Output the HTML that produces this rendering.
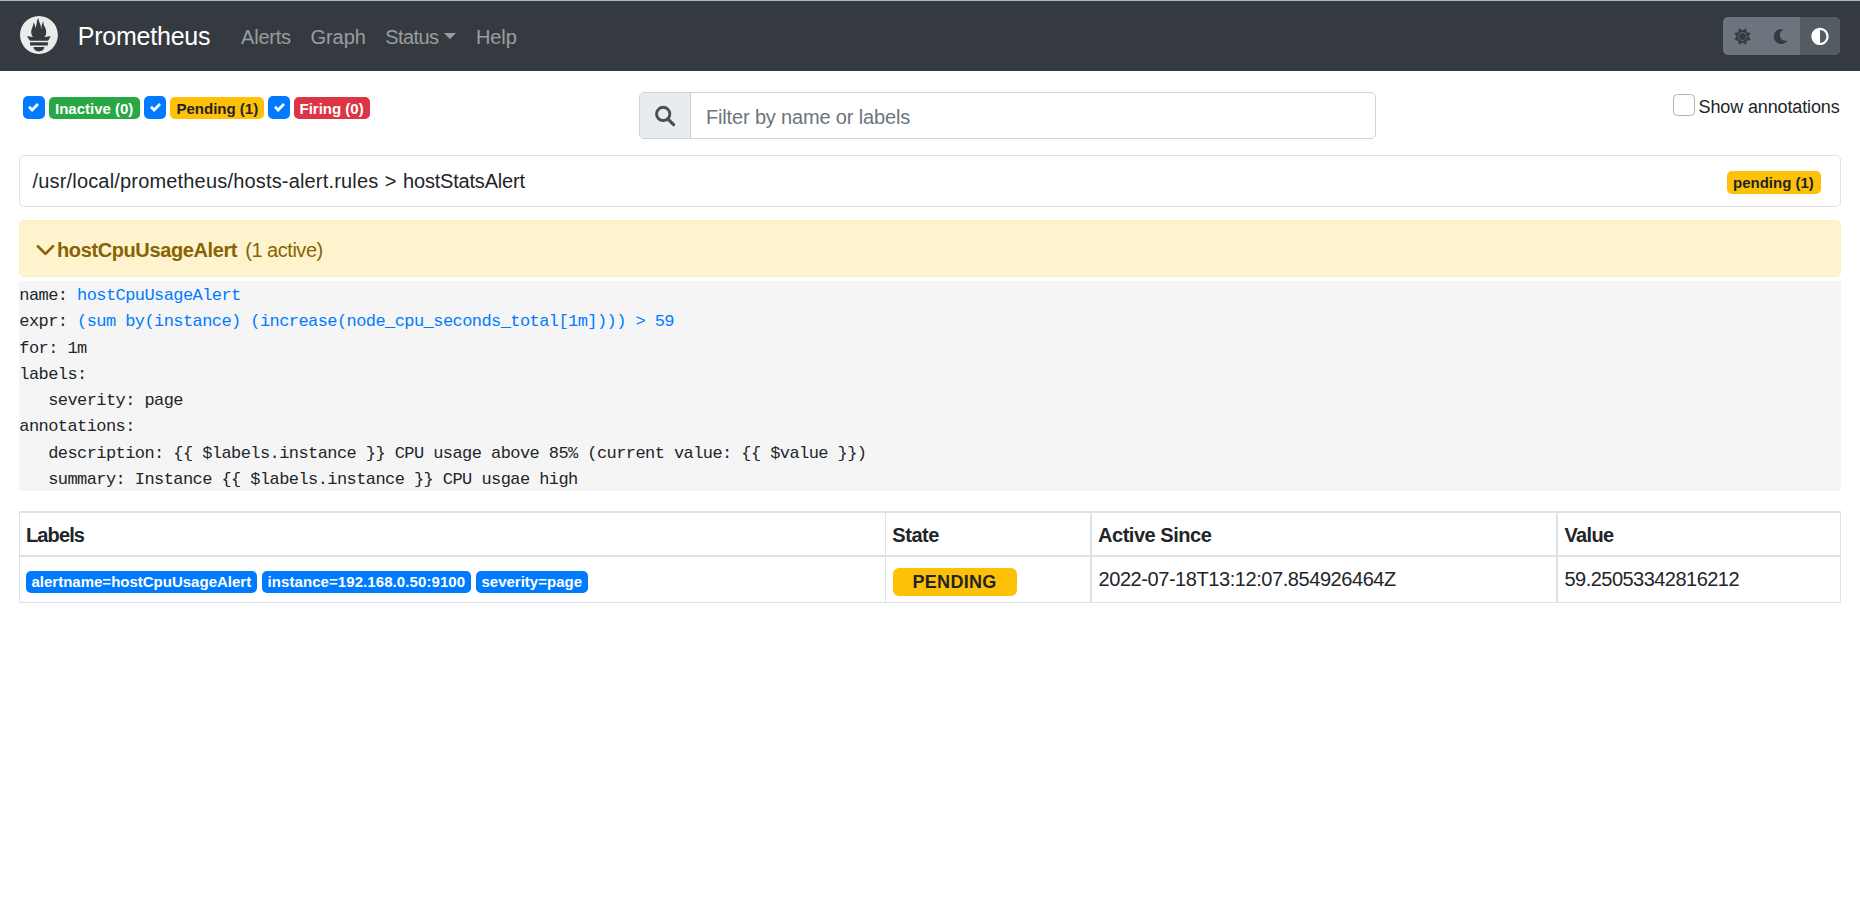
<!DOCTYPE html>
<html><head><meta charset="utf-8">
<style>
html,body{margin:0;padding:0;}
body{width:1860px;height:902px;position:relative;overflow:hidden;background:#fff;font-family:"Liberation Sans",sans-serif;color:#212529;}
.a{position:absolute;white-space:pre;}
.t{position:absolute;white-space:pre;line-height:1;}
#topline{left:0;top:0;width:1860px;height:1px;background:#a6b8ba;}
#nav{left:0;top:1px;width:1860px;height:69.5px;background:#343a40;}
.navl{color:rgba(255,255,255,.5);font-size:20px;}
.cb{position:absolute;width:22px;height:22.5px;background:#007bff;border-radius:5px;}
.cb svg{position:absolute;left:5.5px;top:5.6px;width:11px;height:11px;}
.badge{position:absolute;border-radius:5px;}
.bt{position:absolute;white-space:pre;line-height:1;font-weight:700;font-size:15px;}
.th{position:absolute;white-space:pre;line-height:1;font-weight:700;font-size:20px;color:#212529;}
pre{margin:0;}
.code{position:absolute;left:19px;top:281px;width:1822px;height:210px;background:#f5f5f5;}
.cl{position:absolute;left:19.3px;white-space:pre;font-family:"Liberation Mono",monospace;font-size:17px;line-height:1;color:#212529;letter-spacing:-0.575px;}
.blue{color:#007bff;}
</style></head><body>
<div class="a" id="topline"></div>
<div class="a" id="nav"></div>

<!-- logo -->
<svg class="a" style="left:19.8px;top:16.1px;width:37.9px;height:37.9px" viewBox="0 0 24 24"><path fill="#ebebeb" d="M12 0C5.373 0 0 5.375 0 12c0 6.627 5.373 12 12 12s12-5.373 12-12c0-6.625-5.373-12-12-12zm0 22.46c-1.885 0-3.414-1.26-3.414-2.814h6.828c0 1.553-1.528 2.813-3.414 2.813zm5.64-3.745H6.36v-2.046h11.28v2.046zm-.04-3.098H6.391c-.037-.043-.075-.086-.111-.13-1.155-1.401-1.427-2.133-1.69-2.879-.005-.025 1.4.287 2.395.511 0 0 .513.119 1.262.255-.72-.843-1.147-1.915-1.147-3.01 0-2.406 1.845-4.508 1.18-6.207.648.053 1.34 1.367 1.387 3.422.689-.951.977-2.69.977-3.755 0-1.103.727-2.385 1.454-2.429-.648 1.069.168 1.984.894 4.256.272.854.237 2.29.447 3.201.07-1.892.395-4.652 1.595-5.605-.529 1.2.079 2.702.494 3.424.671 1.164 1.078 2.047 1.078 3.716a4.642 4.642 0 01-1.11 2.996c.792-.149 1.34-.283 1.34-.283l2.573-.502s-.374 1.538-1.81 3.019z"/></svg>

<div class="t" style="left:77.7px;top:23.6px;font-size:25px;color:#fff;letter-spacing:-0.22px">Prometheus</div>
<div class="t navl" style="left:241px;top:26.8px;letter-spacing:-0.2px">Alerts</div>
<div class="t navl" style="left:310.5px;top:26.8px;letter-spacing:-0.05px">Graph</div>
<div class="t navl" style="left:385.2px;top:26.8px;letter-spacing:-0.58px">Status</div>
<svg class="a" style="left:444px;top:32.8px;width:12px;height:6.2px" viewBox="0 0 12 6.2"><path d="M0 0H12L6 6.2Z" fill="rgba(255,255,255,.5)"/></svg>
<div class="t navl" style="left:476px;top:26.8px;letter-spacing:-0.1px">Help</div>

<!-- theme group -->
<div class="a" style="left:1723px;top:17px;width:117px;height:38px;border-radius:5px;overflow:hidden;background:#6c757d">
  <div class="a" style="left:77px;top:0;width:40px;height:38px;background:#545b62"></div>
</div>
<svg class="a" style="left:1732px;top:26px;width:21px;height:21px" viewBox="0 0 21 21"><polygon points="10.50,4.60 13.83,2.46 14.67,6.33 18.54,7.17 16.40,10.50 18.54,13.83 14.67,14.67 13.83,18.54 10.50,16.40 7.17,18.54 6.33,14.67 2.46,13.83 4.60,10.50 2.46,7.17 6.33,6.33 7.17,2.46" fill="#343a40" stroke="#343a40" stroke-width="0.3" stroke-linejoin="round"/><circle cx="10.5" cy="10.5" r="4.3" fill="#6c757d"/><circle cx="10.5" cy="10.5" r="3.5" fill="#343a40"/></svg>
<svg class="a" style="left:1772.7px;top:28.6px;width:15.1px;height:15.1px" viewBox="0 0 512 512"><path fill="#343a40" d="M283.211 512c78.962 0 151.079-35.925 198.857-94.792 7.068-8.708-.639-21.43-11.562-19.35-124.203 23.654-238.262-71.576-238.262-196.954 0-72.222 38.662-138.635 101.498-174.394 9.686-5.512 7.25-20.197-3.756-22.23A258.156 258.156 0 0 0 283.211 0c-141.309 0-256 114.511-256 256 0 141.309 114.511 256 256 256z"/></svg>
<svg class="a" style="left:1810px;top:26px;width:20px;height:21px" viewBox="0 0 20 21"><g transform="translate(1.122 1.522) scale(0.03468)"><path fill="#fff" d="M8 256c0 136.966 111.033 248 248 248s248-111.034 248-248S392.966 8 256 8 8 119.033 8 256zm248 184V72c101.705 0 184 82.311 184 184 0 101.705-82.311 184-184 184z"/></g></svg>

<!-- filter checkboxes and badges -->
<div class="cb" style="left:22.9px;top:96.2px"><svg viewBox="0 0 8 8"><path fill="#fff" d="M6.564.75l-3.59 3.612-1.538-1.55L0 4.26 2.974 7.25 8 2.193z"/></svg></div>
<div class="badge" style="left:49px;top:97px;width:91px;height:22px;background:#28a745"></div>
<div class="bt" style="left:55px;top:101px;color:#fff">Inactive (0)</div>
<div class="cb" style="left:144px;top:96.2px"><svg viewBox="0 0 8 8"><path fill="#fff" d="M6.564.75l-3.59 3.612-1.538-1.55L0 4.26 2.974 7.25 8 2.193z"/></svg></div>
<div class="badge" style="left:170px;top:97px;width:94px;height:22px;background:#ffc107"></div>
<div class="bt" style="left:176.5px;top:101px;color:#212529">Pending (1)</div>
<div class="cb" style="left:268px;top:96.2px"><svg viewBox="0 0 8 8"><path fill="#fff" d="M6.564.75l-3.59 3.612-1.538-1.55L0 4.26 2.974 7.25 8 2.193z"/></svg></div>
<div class="badge" style="left:294px;top:97px;width:76px;height:22px;background:#dc3545"></div>
<div class="bt" style="left:299.5px;top:101px;color:#fff">Firing (0)</div>

<!-- search input group -->
<div class="a" style="left:639px;top:92px;width:734.5px;height:44.5px;border:1.25px solid #ced4da;border-radius:5px;background:#fff;overflow:hidden">
  <div class="a" style="left:0;top:0;width:49.8px;height:100%;background:#e9ecef;border-right:1.25px solid #ced4da"></div>
</div>
<svg class="a" style="left:653px;top:104px;width:24px;height:24px" viewBox="0 0 24 24"><circle cx="10.2" cy="9.9" r="6.65" fill="none" stroke="#495057" stroke-width="2.9"/><path d="M15.2 15.3L20.6 20.6" stroke="#495057" stroke-width="3.2" stroke-linecap="round"/></svg>
<div class="t" style="left:706px;top:106.8px;font-size:20px;color:#6c757d;letter-spacing:-0.16px">Filter by name or labels</div>

<!-- show annotations -->
<div class="a" style="left:1673.2px;top:94.1px;width:20px;height:19.6px;border:1.25px solid #adb5bd;border-radius:4.5px;background:#fff"></div>
<div class="t" style="left:1698.5px;top:97.8px;font-size:18px;color:#212529;letter-spacing:-0.13px">Show annotations</div>

<!-- rule group card -->
<div class="a" style="left:19px;top:155px;width:1819.5px;height:49.5px;border:1.25px solid #dfe3e7;border-radius:5px"></div>
<div class="t" style="left:32.5px;top:171.2px;font-size:20px;letter-spacing:0.176px;color:#212529">/usr/local/prometheus/hosts-alert.rules</div>
<div class="t" style="left:384.7px;top:171.2px;font-size:20px;color:#212529">&gt;</div>
<div class="t" style="left:403.1px;top:171.2px;font-size:20px;letter-spacing:-0.2px;color:#212529">hostStatsAlert</div>
<div class="badge" style="left:1727px;top:171px;width:94px;height:23px;background:#ffc107"></div>
<div class="bt" style="left:1733px;top:174.5px;color:#212529">pending (1)</div>

<!-- alert header -->
<div class="a" style="left:19px;top:220px;width:1819.5px;height:54.5px;border:1.25px solid #ffeeba;border-radius:5px;background:#fff3cd"></div>
<svg class="a" style="left:30px;top:240px;width:30px;height:20px" viewBox="0 0 30 20"><path d="M7.8 6.3L15.5 13.9L23.1 6.1" fill="none" stroke="#856404" stroke-width="2.6" stroke-linecap="round" stroke-linejoin="round"/></svg>
<div class="t" style="left:57px;top:239.8px;font-size:20px;font-weight:700;color:#856404;letter-spacing:-0.39px">hostCpuUsageAlert</div>
<div class="t" style="left:245.2px;top:239.8px;font-size:20px;color:#856404;letter-spacing:-0.47px">(1 active)</div>

<!-- code block -->
<div class="code"></div>
<div class="cl" style="top:287.20px">name: <span class="blue">hostCpuUsageAlert</span></div>
<div class="cl" style="top:313.45px">expr: <span class="blue">(sum by(instance) (increase(node_cpu_seconds_total[1m]))) &gt; 59</span></div>
<div class="cl" style="top:339.70px">for: 1m</div>
<div class="cl" style="top:365.95px">labels:</div>
<div class="cl" style="top:392.20px">   severity: page</div>
<div class="cl" style="top:418.45px">annotations:</div>
<div class="cl" style="top:444.70px">   description: {{ $labels.instance }} CPU usage above 85% (current value: {{ $value }})</div>
<div class="cl" style="top:470.95px">   summary: Instance {{ $labels.instance }} CPU usgae high</div>

<!-- table -->
<div class="a" style="left:19px;top:511px;width:1822px;height:1.5px;background:#dee2e6"></div>
<div class="a" style="left:19px;top:555px;width:1822px;height:2.2px;background:#dee2e6"></div>
<div class="a" style="left:19px;top:601.5px;width:1822px;height:1.3px;background:#dee2e6"></div>
<div class="a" style="left:19px;top:511px;width:1.3px;height:91.8px;background:#dee2e6"></div>
<div class="a" style="left:885px;top:511px;width:1.4px;height:91.8px;background:#dee2e6"></div>
<div class="a" style="left:1090.3px;top:511px;width:1.4px;height:91.8px;background:#dee2e6"></div>
<div class="a" style="left:1556.3px;top:511px;width:1.4px;height:91.8px;background:#dee2e6"></div>
<div class="a" style="left:1839.7px;top:511px;width:1.3px;height:91.8px;background:#dee2e6"></div>

<div class="th" style="left:26px;top:525px;letter-spacing:-0.88px">Labels</div>
<div class="th" style="left:892.2px;top:525.2px;letter-spacing:-0.4px">State</div>
<div class="th" style="left:1098px;top:525.2px;letter-spacing:-0.47px">Active Since</div>
<div class="th" style="left:1564.5px;top:525.2px;letter-spacing:-0.64px">Value</div>

<div class="badge" style="left:26px;top:571px;width:231px;height:22px;background:#007bff"></div>
<div class="bt" style="left:31.5px;top:574px;color:#fff">alertname=hostCpuUsageAlert</div>
<div class="badge" style="left:262px;top:571px;width:209px;height:22px;background:#007bff"></div>
<div class="bt" style="left:267.5px;top:574px;color:#fff;letter-spacing:0.08px">instance=192.168.0.50:9100</div>
<div class="badge" style="left:476px;top:571px;width:112px;height:22px;background:#007bff"></div>
<div class="bt" style="left:481.5px;top:574px;color:#fff">severity=page</div>

<div class="badge" style="left:893px;top:568px;width:124px;height:28px;background:#ffc107;border-radius:6px"></div>
<div class="t" style="left:912.5px;top:572.5px;font-size:18px;font-weight:700;color:#212529;letter-spacing:0.3px">PENDING</div>
<div class="t" style="left:1098.5px;top:568.8px;font-size:20px;color:#212529;letter-spacing:-0.43px">2022-07-18T13:12:07.854926464Z</div>
<div class="t" style="left:1564.5px;top:568.8px;font-size:20px;color:#212529;letter-spacing:-0.53px">59.25053342816212</div>

</body></html>
